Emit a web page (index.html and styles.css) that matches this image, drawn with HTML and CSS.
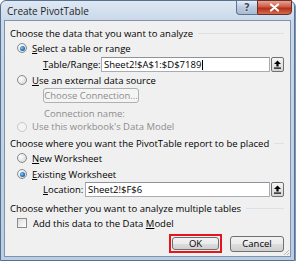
FILE: index.html
```html
<!DOCTYPE html>
<html>
<head>
<meta charset="utf-8">
<link rel="stylesheet" href="styles.css">
</head>
<body>
<div class="window">
  <div class="titlebar">
    <span class="title">Create PivotTable</span>
    <div class="caption-btns">
      <div class="cap help">?</div>
      <div class="cap close">
        <svg width="11" height="9" viewBox="0 0 11 9"><path d="M2 1.5 L9 7.5 M9 1.5 L2 7.5" stroke="#fff" stroke-width="2.2" stroke-linecap="round"/></svg>
      </div>
    </div>
  </div>
  <div class="client">
    <div class="group-h h1">Choose the data that you want to analyze</div>
    <div class="row opt r-select"><span class="radio checked"></span><span><u>S</u>elect a table or range</span></div>
    <div class="row field r-range">
      <span class="label"><u>T</u>able/Range:</span>
      <div class="input wide-label"><span>Sheet2!$A$1:$D$7189</span><span class="caret"></span></div>
      <div class="upbtn"><svg width="9" height="9" viewBox="0 0 9 9"><path d="M4.5 0.5 L8 4 L5.6 4 L5.6 6.5 L3.4 6.5 L3.4 4 L1 4 Z" fill="#000"/><rect x="1" y="7.5" width="7" height="1.2" fill="#000"/></svg></div>
    </div>
    <div class="row opt r-ext"><span class="radio"></span><span><u>U</u>se an external data source</span></div>
    <div class="row r-conn"><div class="btn disabled conn">Choose Connection...</div></div>
    <div class="row r-cname disabled-text">Connection name:</div>
    <div class="row opt r-model disabled-text"><span class="radio disabled"></span><span>Use this workbook's Data Model</span></div>
    <div class="group-h h2">Choose where you want the PivotTable report to be placed</div>
    <div class="row opt r-new"><span class="radio"></span><span><u>N</u>ew Worksheet</span></div>
    <div class="row opt r-exist"><span class="radio checked"></span><span><u>E</u>xisting Worksheet</span></div>
    <div class="row field r-loc">
      <span class="label"><u>L</u>ocation:</span>
      <div class="input"><span>Sheet2!$F$6</span></div>
      <div class="upbtn"><svg width="9" height="9" viewBox="0 0 9 9"><path d="M4.5 0.5 L8 4 L5.6 4 L5.6 6.5 L3.4 6.5 L3.4 4 L1 4 Z" fill="#000"/><rect x="1" y="7.5" width="7" height="1.2" fill="#000"/></svg></div>
    </div>
    <div class="group-h h3">Choose whether you want to analyze multiple tables</div>
    <div class="row opt r-add"><span class="check"></span><span>Add this data to the Data <u>M</u>odel</span></div>
    <div class="actions">
      <div class="ok-wrap"><div class="btn ok">OK</div></div>
      <div class="btn cancel">Cancel</div>
    </div>
    <div class="grip"></div>
  </div>
</div>
</body>
</html>
```

FILE: styles.css
```css
html, body {
  margin: 0;
  padding: 0;
  background: #ffffff;
}
body {
  font-family: "Open Sans", "Noto Sans", sans-serif;
  font-size: 9.5px;
  color: #000;
}
.window {
  width: 295px;
  height: 261px;
  box-sizing: border-box;
  border: 1px solid #56708f;
  border-radius: 6px 6px 0 0;
  background: linear-gradient(to bottom, #dfe8f3 0px, #c9d8ea 20px, #b9cde5 100%);
  display: flex;
  flex-direction: column;
  padding: 0 3px 3px 3px;
  box-shadow: 1px 1px 0 #7d96b7;
}
.titlebar {
  height: 19px;
  display: flex;
  align-items: flex-start;
  position: relative;
}
.title {
  font-size: 10px;
  margin-top: 3px;
  margin-left: 3px;
  color: #1e1e1e;
}
.caption-btns {
  margin-left: auto;
  display: flex;
  margin-top: -1px;
  margin-right: -1px;
}
.cap {
  height: 15px;
  display: flex;
  align-items: center;
  justify-content: center;
  box-sizing: border-box;
  border: 1px solid #5f738e;
}
.help {
  width: 21px;
  border-radius: 0 0 0 4px;
  border-right: none;
  background: linear-gradient(to bottom, #e6eef8, #b9c9de 50%, #a9bcd5);
  color: #3e4c60;
  font-weight: bold;
  font-size: 10px;
  font-family: "DejaVu Sans", sans-serif;
  text-shadow: 0 0 2px #fff;
}
.close {
  width: 35px;
  border-radius: 0 0 4px 0;
  background: linear-gradient(to bottom, #e5a497, #cc5a44 45%, #b72e17 55%, #cf6b4f);
  border-color: #6a2e26;
}
.client {
  flex: 1;
  background: #f0f0f0;
  border: 1px solid #8293a8;
  display: flex;
  flex-direction: column;
  padding: 0 4px 0 5px;
  position: relative;
}
.group-h {
  display: flex;
  align-items: center;
  height: 14px;
  white-space: nowrap;
}
.group-h::after {
  content: "";
  flex: 1;
  border-top: 1px solid #dde0e4;
  margin-left: 5px;
  margin-right: 2px;
}
.h1 { margin-top: 5px; }
.h2 { margin-top: 3px; }
.h3 { margin-top: 4px; }
.row {
  display: flex;
  align-items: center;
  height: 14px;
  white-space: nowrap;
}
.opt { padding-left: 7px; }
.radio {
  width: 8px;
  height: 8px;
  border-radius: 50%;
  border: 1px solid #8b8b8b;
  background: radial-gradient(circle at 35% 35%, #ffffff 0%, #e8e8e8 50%, #cfcfcf 100%);
  margin-right: 5px;
  position: relative;
  flex: none;
}
.radio.checked::after {
  content: "";
  position: absolute;
  left: 1.5px;
  top: 1.5px;
  width: 5px;
  height: 5px;
  border-radius: 50%;
  background: radial-gradient(circle at 40% 40%, #8ed0ff 0%, #2a7fcf 45%, #0f3f78 100%);
}
.radio.disabled {
  border-color: #c7c7c7;
  background: #f4f4f4;
}
.check {
  width: 8px;
  height: 8px;
  border: 1px solid #8b8b8b;
  background: linear-gradient(135deg, #dcdcdc, #ffffff);
  margin-right: 6px;
  flex: none;
}
.disabled-text { color: #8d8d8d; }
.r-select { margin-top: 1px; }
.field { padding-left: 33px; height: 15px; }
.r-range { margin-top: 2px; }
.label { width: 58px; flex: none; }
.r-loc .label { width: 42px; }
.input {
  flex: 1;
  height: 15px;
  box-sizing: border-box;
  background: #fff;
  border: 1px solid #a9acb3;
  border-top-color: #8e939b;
  display: flex;
  align-items: center;
  padding-left: 2px;
}
.caret {
  width: 1px;
  height: 10px;
  background: #000;
  margin-left: 1px;
}
.upbtn {
  width: 13px;
  height: 15px;
  box-sizing: border-box;
  margin-left: 1px;
  margin-right: 2px;
  border: 1px solid #707070;
  border-radius: 2px;
  background: linear-gradient(to bottom, #f6f6f6, #e4e4e4 50%, #d6d6d6);
  display: flex;
  align-items: center;
  justify-content: center;
}
.r-ext { margin-top: 1px; }
.r-conn { padding-left: 33px; height: 15px; margin-top: 1px; }
.btn {
  box-sizing: border-box;
  border: 1px solid #707070;
  border-radius: 3px;
  background: linear-gradient(to bottom, #f2f2f2 0%, #ebebeb 50%, #dddddd 51%, #cfcfcf 100%);
  display: flex;
  align-items: center;
  justify-content: center;
}
.btn.disabled {
  border-color: #adb2b5;
  background: #f4f4f4;
  color: #8d8d8d;
}
.conn { width: 96px; height: 15px; }
.r-cname { padding-left: 34px; height: 13px; margin-top: 4px; }
.r-model { height: 13px; }
.r-new { margin-top: 1px; }
.r-exist { margin-top: 2px; }
.r-loc { margin-top: 1px; }
.r-add { margin-top: 1px; }
.actions {
  display: flex;
  justify-content: flex-end;
  align-items: center;
  margin-top: 4px;
  padding-right: 2px;
}
.ok-wrap {
  border: 2px solid #e8141b;
  padding: 1px;
  margin-right: 8px;
}
.ok { width: 47px; height: 13px; }
.cancel { width: 54px; height: 16px; }
.grip {
  position: absolute;
  right: 1px;
  bottom: 1px;
  width: 6px;
  height: 6px;
  background: linear-gradient(135deg, transparent 50%, #b8b8b8 50%, #b8b8b8 60%, transparent 60%, transparent 75%, #b8b8b8 75%, #b8b8b8 85%, transparent 85%);
}
```
